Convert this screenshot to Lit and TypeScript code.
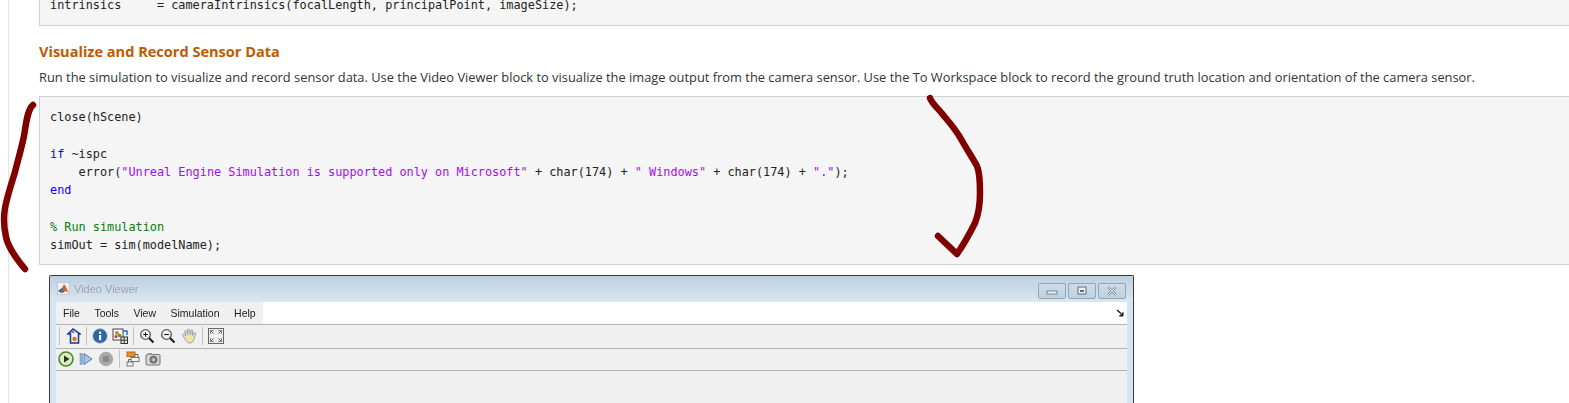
import { LitElement, html, css, svg } from "lit";
import { customElement } from "lit/decorators.js";

const icon = (body: unknown) => html`<svg class="ico" viewBox="0 0 16 16">${body}</svg>`;

const icons = {
  home: svg`<path d="M8 1 3 6h2.500v9h8V6H15z" fill="#f4f6fb" stroke="#1c2f8a" stroke-width="1.500"/><circle cx="9.500" cy="11" r="2.200" fill="#d4761c"/><path d="M6 5 8 2l2 3" fill="#5a86c8"/>`,
  info: svg`<circle cx="8" cy="8" r="7.200" fill="#2c659f" stroke="#8aa7c4" stroke-width=".8"/><rect x="7" y="7" width="2.200" height="5.200" fill="#fff"/><rect x="7" y="3.600" width="2.200" height="2.200" fill="#fff"/>`,
  cfg: svg`<rect x="1" y="1" width="10" height="11" fill="#f5f5f5" stroke="#444"/><circle cx="5" cy="5" r="2" fill="#d8862a"/><circle cx="7.500" cy="7.500" r="1.800" fill="#4b9a3c"/><circle cx="4" cy="8.500" r="1.500" fill="#c33"/><path d="M11 3h4v4" fill="none" stroke="#2c62c9" stroke-width="1.400"/><rect x="9" y="9" width="6.500" height="6.500" fill="#e8e8d8" stroke="#333"/><path d="M12.200 9v6.500M9 12.200h6.500" stroke="#333"/>`,
  zoomIn: svg`<circle cx="6.500" cy="6.500" r="4.800" fill="#fafafa" stroke="#555" stroke-width="1.300"/><path d="M4.200 6.500h4.600M6.500 4.200v4.600" stroke="#111" stroke-width="1.100"/><path d="m10 10 4.500 4.500" stroke="#222" stroke-width="2.200"/>`,
  zoomOut: svg`<circle cx="6.500" cy="6.500" r="4.800" fill="#fafafa" stroke="#555" stroke-width="1.300"/><path d="M4.200 6.500h4.600" stroke="#111" stroke-width="1.100"/><path d="m10 10 4.500 4.500" stroke="#222" stroke-width="2.200"/>`,
  hand: svg`<path d="M2 8c-1-1 0-2.500 1.500-1.500L5 8 3.500 3.500c0-1.300 1.300-1.300 1.800-.3L7 6.500 6.500 2c0-1.200 1.500-1.200 1.800 0L9.500 6.500 10 2.500c.3-1.100 1.700-.9 1.700.3L11.500 7.500l1.500-2.500c.9-.9 2-.2 1.600 1L13 11c-.5 2.500-2 4-4.500 4C5.500 15 4.500 11 2 8Z" fill="#f8dfa8" stroke="#7f9ac0" stroke-width=".9"/>`,
  fit: svg`<rect x=".5" y=".5" width="15" height="15" fill="#f0f0f0" stroke="#666"/><path d="M2.500 6V2.500H6M10 2.500h3.500V6M13.500 10v3.500H10M6 13.500H2.500V10" fill="none" stroke="#8a8a8a" stroke-width="1.200"/><path d="m3 3 2.500 2.500M13 3l-2.500 2.500M13 13l-2.500-2.500M3 13l2.500-2.500" stroke="#555"/>`,
  play: svg`<circle cx="8" cy="8" r="7" fill="#dfe8cf" stroke="#4c8a1f" stroke-width="1.600"/><path d="m6 4.500 5.500 3.500L6 11.500z" fill="#1e3a10"/>`,
  step: svg`<rect x="2" y="2.500" width="2.500" height="11" fill="#8db0d0" stroke="#6d8fb0" stroke-width=".5"/><path d="m6 2.500 8 5.500-8 5.500z" fill="#a9c6e2" stroke="#4f7fb0" stroke-width="1"/>`,
  stop: svg`<circle cx="8" cy="8" r="7.200" fill="#a9a9a9"/><rect x="5" y="5" width="6" height="6" fill="#8a8a8a"/>`,
  model: svg`<rect x="2" y="1" width="8" height="4.500" fill="#e8912a" stroke="#b5651d"/><rect x="6" y="6.500" width="8" height="4" fill="#f3f3f3" stroke="#777"/><rect x="2" y="11" width="6" height="4" fill="#f3f3f3" stroke="#777"/><path d="M10 3.500h3v3M6 8.500H3.500V11" fill="none" stroke="#666"/>`,
  camera: svg`<rect x="1" y="3.500" width="14" height="10.500" rx="1" fill="#d4d4d4" stroke="#777"/><rect x="3" y="2" width="4" height="2" fill="#999"/><circle cx="8.500" cy="8.700" r="3.400" fill="#888" stroke="#555"/><circle cx="8.500" cy="8.700" r="1.500" fill="#c4c4c4"/>`,
};

@customElement("app-root")
export class AppRoot extends LitElement {
  static styles = css`
    :host {
      display: block;
      height: 403px;
      overflow: hidden;
      background: #fff;
      position: relative;
    }
    .page {
      display: flow-root;
      margin-left: 8px;
      border-left: 1px solid #e4e4e4;
      padding-left: 30px;
      height: 403px;
      box-sizing: border-box;
    }
    .code {
      background: #f5f5f5;
      border: 1px solid #d0d0d0;
      border-right: none;
      padding: 11px 0 9px 10px;
      font-family: "DejaVu Sans Mono", monospace;
      font-size: 11.85px;
      line-height: 18.3px;
      color: #222;
      white-space: pre;
    }
    .code.first {
      border-top: none;
      margin-top: -8px;
      padding: 4px 0 11px 10px;
    }
    .kw { color: #0e00ff; }
    .str { color: #a709f5; }
    .cm { color: #028009; }
    h3 {
      margin: 15px 0 0;
      font: 700 14.55px/20px "Open Sans", sans-serif;
      color: #c05a00;
    }
    p {
      margin: 6px 0 0;
      font: 400 12.87px/20px "Open Sans", sans-serif;
      color: #333;
      white-space: nowrap;
    }
    p + .code { margin-top: 9px; }
    .win {
      margin: 10px 0 0 10px;
      width: 1085px;
      height: 140px;
      box-sizing: border-box;
      border: 1px solid #3a3a3a;
      border-width: 1px 1px 0;
      border-radius: 2px 2px 0 0;
      background: #d6e4f1;
      padding: 0 6px;
      display: flex;
      flex-direction: column;
      font-family: "Liberation Sans", sans-serif;
      filter: blur(0.3px);
    }
    .title {
      height: 26px;
      margin: 0 -6px;
      padding: 0 7px;
      display: flex;
      align-items: center;
      gap: 4px;
      flex: none;
      background: linear-gradient(#bdcfdf, #dbe7f2);
      font-size: 11px;
      color: #9aa5b0;
    }
    .logo { width: 13px; height: 13px; flex: none; }
    .title span { flex: 1; }
    .btns { display: flex; gap: 2px; padding-top: 5px; }
    .btn {
      width: 28px;
      height: 16px;
      box-sizing: border-box;
      border: 1px solid #8ea7bd;
      border-radius: 2px;
      background: linear-gradient(#cfdce8, #bfd0df);
      display: flex;
      align-items: center;
      justify-content: center;
    }
    .btn svg { width: 12px; height: 10px; }
    .menu {
      flex: none;
      height: 22px;
      background: #fff;
      display: flex;
      align-items: center;
      justify-content: space-between;
      padding-right: 3px;
    }
    .items {
      background: #f0f0f0;
      height: 100%;
      width: 207px;
      box-sizing: border-box;
      padding-left: 7px;
      display: flex;
      align-items: center;
      gap: 14.5px;
      font-size: 10.5px;
      color: #222;
    }
    .corner { width: 8px; height: 8px; }
    .bar {
      flex: none;
      display: flex;
      align-items: center;
      gap: 4px;
      background: #f0f0f0;
      border-top: 1px solid #b4b4b4;
      padding-left: 2px;
      box-sizing: border-box;
    }
    .bar.a { height: 24px; }
    .bar.b { height: 22px; }
    .group { display: flex; gap: 5px; }
    .sep { width: 1px; height: 18px; margin: 0 1px; background: #c2c2c2; }
    .ico { width: 16px; height: 16px; flex: none; }
    .canvas { flex: 1; background: #f0f0f0; border-top: 1px solid #b4b4b4; }
    .ink {
      position: absolute;
      inset: 0;
      width: 1569px;
      height: 403px;
      pointer-events: none;
    }
    .ink path {
      fill: none;
      stroke: #800000;
      stroke-width: 6.5px;
      stroke-linecap: round;
      stroke-linejoin: round;
    }
  `;

  render() {
    return html`
      <div class="page">
        <div class="code first">intrinsics     = cameraIntrinsics(focalLength, principalPoint, imageSize);</div>
        <h3>Visualize and Record Sensor Data</h3>
        <p>Run the simulation to visualize and record sensor data. Use the Video Viewer block to visualize the image output from the camera sensor. Use the To Workspace block to record the ground truth location and orientation of the camera sensor.</p>
        <div class="code">close(hScene)

<span class="kw">if</span> ~ispc
    error(<span class="str">"Unreal Engine Simulation is supported only on Microsoft"</span> + char(174) + <span class="str">" Windows"</span> + char(174) + <span class="str">"."</span>);
<span class="kw">end</span>

<span class="cm">% Run simulation</span>
simOut = sim(modelName);</div>
        <div class="win">
          <div class="title">
            <svg class="logo" viewBox="0 0 13 13">
              <rect width="13" height="13" fill="#eef1f5" stroke="#9aa5b0" />
              <path d="M1 9 5 6l2-4 2 3 3 6-3-2-3 2z" fill="#d9632a" />
              <path d="M1 9 5 6l2 3-3 2z" fill="#3d6fb0" />
            </svg>
            <span>Video Viewer</span>
            <div class="btns">
              <div class="btn"><svg viewBox="0 0 12 10"><rect x="1" y="5" width="10" height="3" fill="#eef2f6" stroke="#5e6f80" stroke-width=".8" /></svg></div>
              <div class="btn"><svg viewBox="0 0 12 10"><rect x="2" y="1" width="8" height="7" fill="#eef2f6" stroke="#5e6f80" /><rect x="4" y="4" width="4" height="2" fill="#5e6f80" /></svg></div>
              <div class="btn"><svg viewBox="0 0 12 10"><path d="m2 1 8 8M10 1 2 9" stroke="#7d8b99" stroke-width="2.200" /><path d="m2 1 8 8M10 1 2 9" stroke="#eef2f6" stroke-width=".9" /></svg></div>
            </div>
          </div>
          <div class="menu">
            <div class="items">
              <span>File</span><span>Tools</span><span>View</span><span>Simulation</span><span>Help</span>
            </div>
            <svg class="corner" viewBox="0 0 8 8"><path d="M1 1 5 4.500" stroke="#222" stroke-width="1.600" /><path d="M7.500 2.500V7.500H2.500z" fill="#222" /></svg>
          </div>
          <div class="bar a">
            <div class="sep"></div>
            ${icon(icons.home)}
            <div class="sep"></div>
            ${icon(icons.info)} ${icon(icons.cfg)}
            <div class="sep"></div>
            <div class="group">${icon(icons.zoomIn)} ${icon(icons.zoomOut)} ${icon(icons.hand)}</div>
            <div class="sep"></div>
            ${icon(icons.fit)}
          </div>
          <div class="bar b">
            ${icon(icons.play)} ${icon(icons.step)} ${icon(icons.stop)}
            <div class="sep"></div>
            ${icon(icons.model)} ${icon(icons.camera)}
          </div>
          <div class="canvas"></div>
        </div>
      </div>
      <svg class="ink" viewBox="0 0 1569 403">
        <path d="M33 105C27 110 26 125 24 136C21 150 18 160 15 172C11 185 7 197 5 208C3 220 4 228 6 237C8 247 14 256 25 269" />
        <path d="M930 98C932 104 938 108 944 116C950 123 956 130 961 139C966 148 972 157 977 166C980 173 980 182 980 193C980 205 979 213 975 223C970 233 964 244 957 254L938 236" />
      </svg>
    `;
  }
}
